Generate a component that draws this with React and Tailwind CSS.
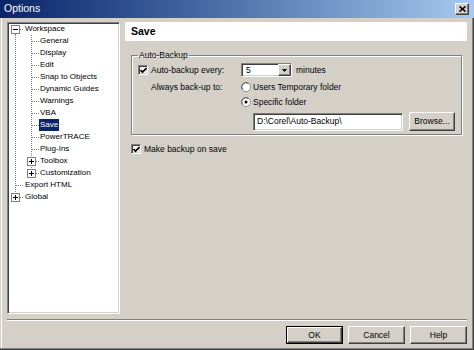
import React from "react";

const FONT = { fontFamily: '"Liberation Sans", Arial, sans-serif' };

const raised =
  "border border-t-white border-l-white border-b-[#404040] border-r-[#404040] shadow-[inset_-1px_-1px_0_#808080] bg-[#d4d0c8]";
const sunken =
  "border border-t-[#808080] border-l-[#808080] border-b-white border-r-white shadow-[inset_1px_1px_0_#404040,inset_-1px_-1px_0_#d4d0c8]";

// --- tree guide cell (dotted connector lines + expand box) ---
const Guide = ({ vert = "none", horiz = false, box = null, w = 16 }) => (
  <svg width={w} height="12" className="shrink-0 block" shapeRendering="crispEdges">
    {vert === "full" && <line x1="7.5" y1="0" x2="7.5" y2="12" stroke="#808080" strokeDasharray="1 1" />}
    {vert === "top" && <line x1="7.5" y1="0" x2="7.5" y2="6" stroke="#808080" strokeDasharray="1 1" />}
    {vert === "bottom" && <line x1="7.5" y1="7" x2="7.5" y2="12" stroke="#808080" strokeDasharray="1 1" />}
    {horiz && <line x1="8" y1="6.5" x2={w} y2="6.5" stroke="#808080" strokeDasharray="1 1" />}
    {box && (
      <g>
        <rect x="3.5" y="2.5" width="8" height="8" fill="white" stroke="#808080" />
        <line x1="5" y1="6.5" x2="10" y2="6.5" stroke="black" />
        {box === "+" && <line x1="7.5" y1="4" x2="7.5" y2="9" stroke="black" />}
      </g>
    )}
  </svg>
);

const Row = ({ children, label, selected }) => (
  <div className="flex items-center h-[12px]">
    {children}
    <span
      className={`leading-[12px] whitespace-nowrap px-[1px] ${selected ? "bg-[#0a246a] text-white" : "text-black"}`}
    >
      {label}
    </span>
  </div>
);

const children = ["General", "Display", "Edit", "Snap to Objects", "Dynamic Guides", "Warnings", "VBA", "Save", "PowerTRACE", "Plug-Ins"];

const Tree = () => (
  <div className={`w-[115px] h-[292px] bg-white ${sunken} text-[8px]`}>
    <Row label="Workspace">
      <Guide vert="bottom" horiz box="-" />
    </Row>
    {children.map((c) => (
      <Row key={c} label={c} selected={c === "Save"}>
        <Guide vert="full" />
        <Guide vert="full" horiz w={15} />
      </Row>
    ))}
    <Row label="Toolbox">
      <Guide vert="full" />
      <Guide vert="full" horiz box="+" w={15} />
    </Row>
    <Row label="Customization">
      <Guide vert="full" />
      <Guide vert="top" horiz box="+" w={15} />
    </Row>
    <Row label="Export HTML">
      <Guide vert="full" horiz />
    </Row>
    <Row label="Global">
      <Guide vert="top" horiz box="+" />
    </Row>
  </div>
);

const Check = () => (
  <div className={`w-[10px] h-[10px] bg-white ${sunken} flex items-center justify-center shrink-0`}>
    <svg width="7" height="7" viewBox="0 0 7 7">
      <path d="M0.5 3 L2.5 5.2 L6.5 1" stroke="black" strokeWidth="1.7" fill="none" />
    </svg>
  </div>
);

const Radio = ({ on }) => (
  <svg width="10" height="10" viewBox="0 0 12 12" className="shrink-0">
    <circle cx="6" cy="6" r="5.5" fill="white" stroke="#808080" />
    <path d="M2 9 A5 5 0 0 1 9 2" stroke="#404040" fill="none" />
    {on && <circle cx="6" cy="6" r="1.8" fill="black" />}
  </svg>
);

const Button = ({ children, isDefault }) => (
  <div className={`w-[57px] h-[18px] ${isDefault ? "border border-black" : ""}`}>
    <div className={`w-full h-full ${raised} flex items-center justify-center text-[8.5px] text-black`}>{children}</div>
  </div>
);

export default function App() {
  return (
    <div
      style={FONT}
      className="w-[474px] h-[350px] bg-[#d4d0c8] flex flex-col px-[3px] pb-[3px] shadow-[inset_-1px_-1px_0_#404040,inset_-2px_-2px_0_#808080,inset_1px_0_0_#d4d0c8,inset_2px_0_0_white] overflow-hidden"
    >
      {/* title bar */}
      <div className="h-[18px] shrink-0 -mx-[3px] pl-[4px] pr-[5px] flex items-center bg-gradient-to-r from-[#0a246a] to-[#a6caf0]">
        <span className="text-white text-[10.5px]">Options</span>
        <div className={`ml-auto w-[14px] h-[12px] ${raised} flex items-center justify-center`}>
          <svg width="7" height="6" viewBox="0 0 7 6">
            <path d="M0.5 0.5 L6.5 5.5 M6.5 0.5 L0.5 5.5" stroke="black" strokeWidth="1.6" />
          </svg>
        </div>
      </div>

      {/* body */}
      <div className="flex px-[4px] pt-[4px] gap-[5px]">
        <Tree />
        <div className="flex-1 flex flex-col text-[8.5px] text-black">
          <div className="h-[19px] bg-white flex items-center pl-[6px]">
            <span className="text-[10.5px] font-bold">Save</span>
          </div>

          <fieldset className="mt-[9px] ml-[6px] mr-[5px] border border-[#808080] shadow-[1px_1px_0_white,inset_1px_1px_0_white] px-[6px] pb-[3px]">
            <legend className="px-[1px] leading-[10px]">Auto-Backup</legend>
            <div className="flex items-center h-[14px] mt-[3px]">
              <div className="w-[103px] flex items-center gap-[3px]">
                <Check />
                <span>Auto-backup every:</span>
              </div>
              <div className={`w-[51px] h-[14px] bg-white ${sunken} flex items-center`}>
                <span className="pl-[4px] flex-1">5</span>
                <div className={`w-[13px] h-[12px] ${raised} flex items-center justify-center`}>
                  <svg width="5" height="3" viewBox="0 0 5 3">
                    <path d="M0 0 H5 L2.5 3 Z" fill="black" />
                  </svg>
                </div>
              </div>
              <span className="ml-[4px]">minutes</span>
            </div>
            <div className="flex items-center h-[14px] mt-[3px]">
              <div className="w-[103px] pl-[13px]">Always back-up to:</div>
              <div className="flex items-center gap-[2px]">
                <Radio />
                <span>Users Temporary folder</span>
              </div>
            </div>
            <div className="flex items-center h-[14px] mt-[1px]">
              <div className="w-[103px]" />
              <div className="flex items-center gap-[2px]">
                <Radio on />
                <span>Specific folder</span>
              </div>
            </div>
            <div className="flex items-center h-[19px] mt-[3px]">
              <div className="w-[115px]" />
              <div className={`w-[150px] h-[18px] bg-white ${sunken} flex items-center pl-[3px]`}>D:\Corel\Auto-Backup\</div>
              <div className={`ml-[6px] w-[46px] h-[19px] ${raised} flex items-center justify-center`}>Browse...</div>
            </div>
          </fieldset>

          <div className="flex items-center h-[14px] mt-[7px] ml-[6px] gap-[3px]">
            <Check />
            <span>Make backup on save</span>
          </div>
        </div>
      </div>

      {/* separator */}
      <div className="mt-[5px] mx-[4px] h-[2px] border-t border-t-[#808080] border-b border-b-white" />

      {/* buttons */}
      <div className="mt-[5px] flex justify-end gap-[5px] pr-[4px]">
        <Button isDefault>OK</Button>
        <Button>Cancel</Button>
        <Button>Help</Button>
      </div>
    </div>
  );
}
